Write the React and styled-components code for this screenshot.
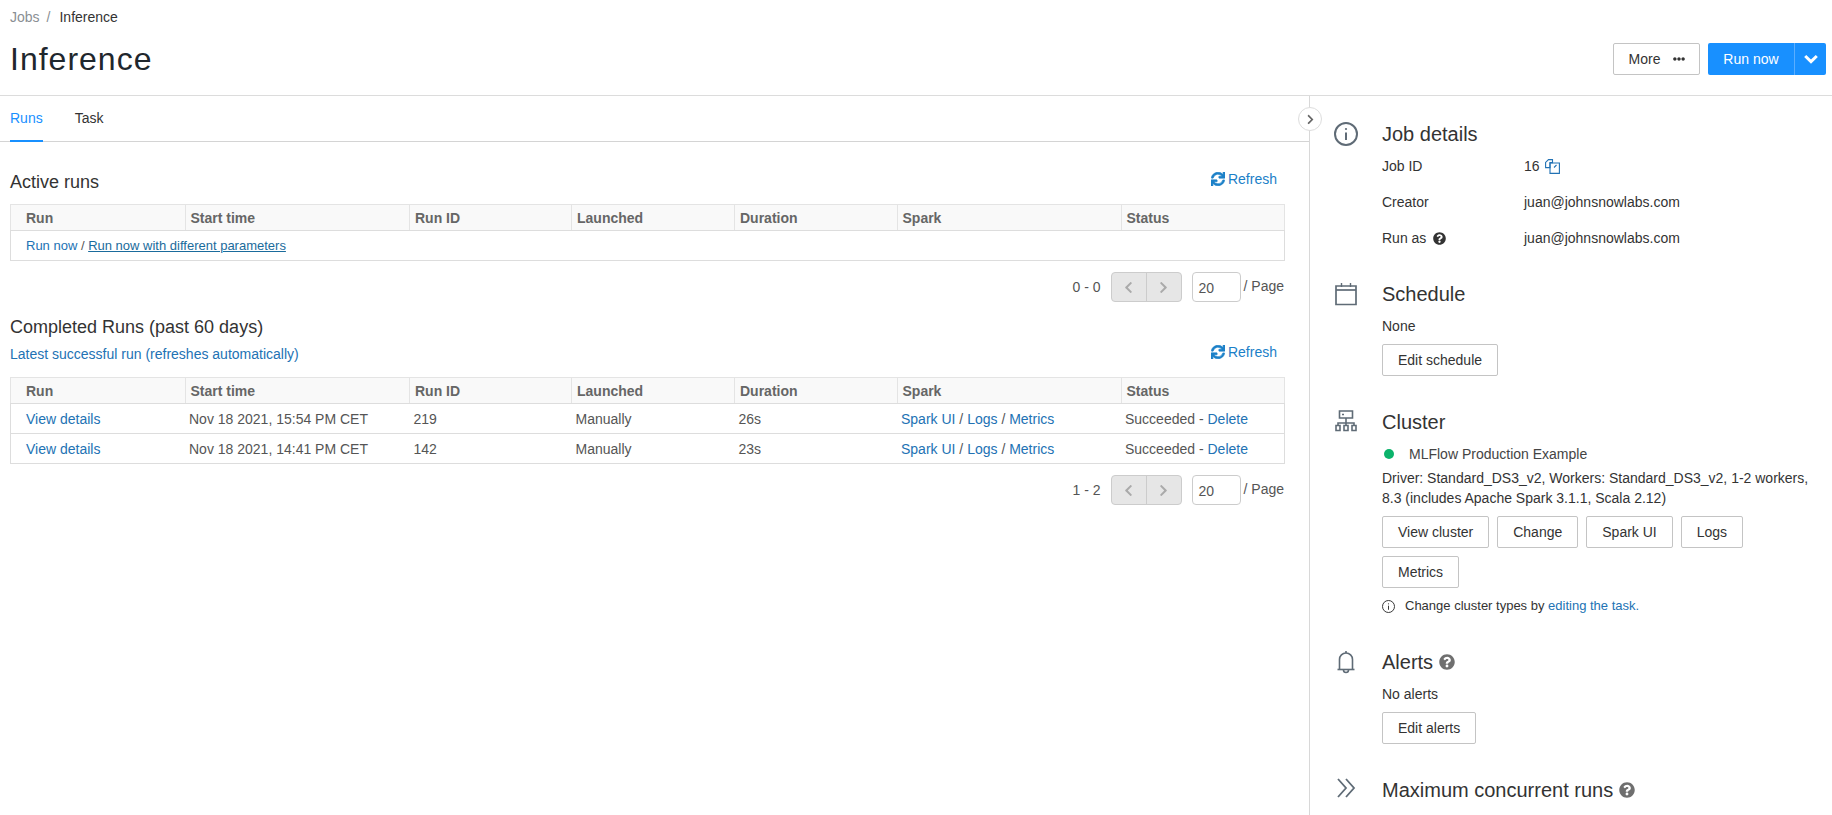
import React from 'react'
import styled, { createGlobalStyle } from 'styled-components'
import { FaChevronLeft, FaChevronRight, FaEllipsisH, FaQuestionCircle, FaSync } from 'react-icons/fa'

const GlobalStyle = createGlobalStyle`
  html, body {
    margin: 0;
    height: 100%;
    overflow: hidden;
    background: #fff;
  }

  body {
    font-family: "Liberation Sans", Arial, sans-serif;
    font-size: 14px;
    line-height: 20px;
    color: #333;
  }
`

const Page = styled.div`
  height: 815px;
  display: flex;
  flex-direction: column;
`

const Header = styled.header`
  height: 95px;
  flex: none;
  padding: 0 6px 0 10px;
  border-bottom: 1px solid #dcdcdc;
  display: flex;
  justify-content: space-between;
  align-items: flex-start;
`

const Crumbs = styled.div`
  margin-top: 7px;
  color: #8a8f93;

  span {
    margin: 0 9px 0 7px;
  }

  b {
    font-weight: normal;
    color: #333;
  }
`

const Title = styled.h1`
  margin: 10px 0 0;
  font-size: 32px;
  line-height: 44px;
  font-weight: normal;
  letter-spacing: 1px;
  color: #1f272d;
`

const Actions = styled.div`
  display: flex;
  gap: 8px;
  margin-top: 43px;
`

const MoreButton = styled.button`
  box-sizing: border-box;
  width: 87px;
  height: 32px;
  padding: 0 0 0 1px;
  border: 1px solid #c4c4c4;
  border-radius: 2px;
  background: #fff;
  color: #333;
  font: inherit;
  display: flex;
  align-items: center;
  justify-content: center;
  gap: 13px;

  svg {
    font-size: 12px;
  }
`

const SplitButton = styled.div`
  display: flex;
  height: 32px;
  border-radius: 2px;
  background: #1890ff;
  color: #fff;
`

const RunButton = styled.div`
  width: 87px;
  box-sizing: border-box;
  display: flex;
  align-items: center;
  justify-content: center;
  border-right: 1px solid #5aaeff;
`

const CaretButton = styled.div`
  width: 31px;
  display: flex;
  align-items: center;
  justify-content: center;
`

const Body = styled.div`
  flex: 1;
  display: flex;
  min-height: 0;
`

const Main = styled.main`
  box-sizing: border-box;
  width: 1309px;
  flex: none;
  position: relative;
`

const Tabs = styled.nav`
  height: 45px;
  padding-left: 10px;
  display: flex;
  gap: 32px;
  border-bottom: 1px solid #d4d4d4;
`

const Tab = styled.div`
  height: 46px;
  box-sizing: border-box;
  padding-top: 12px;
  color: ${props => (props.active ? '#1890ff' : '#333')};
  border-bottom: ${props => (props.active ? '2px solid #1890ff' : 'none')};
`

const Content = styled.div`
  padding: 0 25px 0 10px;
`

const SectionHead = styled.div`
  display: flex;
  justify-content: space-between;
  align-items: flex-start;
  margin-top: ${props => props.top}px;
  margin-bottom: ${props => props.bottom}px;
`

const SectionTitle = styled.h3`
  margin: 0;
  font-size: 18px;
  line-height: 24px;
  font-weight: normal;
  color: #333;
`

const LatestLink = styled.a`
  display: block;
  margin-top: 5px;
  color: #2272b4;
`

const RefreshLink = styled.a`
  display: flex;
  align-items: center;
  gap: 3px;
  margin-top: ${props => props.top}px;
  margin-right: 7px;
  color: #1b80c8;

  svg {
    font-size: 14px;
    stroke: currentColor;
    stroke-width: 24;
  }
`

const Table = styled.table`
  width: 1274px;
  table-layout: fixed;
  border-collapse: collapse;
  border: 1px solid #ddd;
`

const Th = styled.th`
  height: 25px;
  padding: 0 0 0 ${props => (props.first ? '15px' : '5px')};
  background: #f9f9f9;
  border: 1px solid #e4e4e4;
  border-bottom-color: #ddd;
  text-align: left;
  color: #666;
  font-size: 14px;
  font-weight: bold;
`

const Td = styled.td`
  height: 29px;
  padding: 0 0 0 ${props => (props.first ? '15px' : '4px')};
  border-top: 1px solid #ddd;
  color: #555;
  white-space: nowrap;
`

const ActionCell = styled(Td)`
  font-size: 13px;
`

const Link = styled.a`
  color: #2272b4;
`

const UnderLink = styled.a`
  color: #1a6b9c;
  text-decoration: underline;
`

const Pager = styled.div`
  display: flex;
  justify-content: flex-end;
  align-items: center;
  height: 30px;
  margin-top: 11px;
  color: #555;
`

const PagerCount = styled.span`
  margin-right: 10px;
`

const PagerButtons = styled.div`
  box-sizing: border-box;
  width: 71px;
  height: 30px;
  display: flex;
  border: 1px solid #ccc;
  border-radius: 4px;
  background: #e6e6e6;
  color: #aaa;
`

const PagerButton = styled.div`
  flex: 1;
  display: flex;
  align-items: center;
  justify-content: center;
  font-size: 13px;

  & + & {
    border-left: 1px solid #ccc;
  }
`

const PageSize = styled.div`
  box-sizing: border-box;
  width: 49px;
  height: 30px;
  margin-left: 10px;
  padding: 5px 0 0 6px;
  border: 1px solid #ccc;
  border-radius: 4px;
`

const PerPage = styled.span`
  margin-left: 3px;
  margin-top: -2px;
`

const CollapseToggle = styled.div`
  position: absolute;
  top: 11px;
  right: -13px;
  box-sizing: border-box;
  width: 24px;
  height: 24px;
  border: 1px solid #ddd;
  border-radius: 50%;
  background: #fff;
  color: #666;
  display: flex;
  align-items: center;
  justify-content: center;
  font-size: 11px;
  z-index: 2;
`

const Side = styled.aside`
  flex: 1;
  border-left: 1px solid #d8d8d8;
  padding-top: 26px;
  overflow: hidden;
`

const Section = styled.section`
  display: grid;
  grid-template-columns: 72px 1fr;
  margin-bottom: ${props => props.gap || 34}px;
`

const IconCell = styled.div`
  color: #5f6b76;
  display: flex;
  justify-content: center;
  width: 72px;
`

const SectionBody = styled.div`
  min-width: 0;
  padding-right: 20px;
`

const SideHeading = styled.h3`
  margin: 0 0 10px;
  font-size: 20px;
  line-height: 24px;
  font-weight: normal;
  color: #333;
  display: flex;
  align-items: center;
  gap: 6px;
  white-space: nowrap;

  svg {
    font-size: 16px;
    color: #6f6f6f;
  }
`

const DetailRow = styled.div`
  display: grid;
  grid-template-columns: 142px 1fr;
  height: 36px;
  margin-top: ${props => (props.first ? '-8px' : '0')};
`

const DetailLabel = styled.div`
  display: flex;
  align-items: center;
  align-self: start;
  gap: 7px;
  height: 20px;
  margin-top: 8px;

  svg {
    font-size: 13px;
    color: #333;
  }
`

const DetailValue = styled.div`
  display: flex;
  align-items: center;
  align-self: start;
  gap: 5px;
  height: 20px;
  margin-top: 8px;
`

const Plain = styled.div`
  margin-bottom: 8px;
`

const OutlineButton = styled.div`
  box-sizing: border-box;
  height: 32px;
  padding: 0 15px;
  border: 1px solid #c4c4c4;
  border-radius: 2px;
  background: #fff;
  display: inline-flex;
  align-items: center;
`

const ButtonRow = styled.div`
  display: flex;
  flex-wrap: wrap;
  gap: 8px;
  width: 425px;
`

const ClusterName = styled.div`
  display: flex;
  align-items: center;
  color: #444;
`

const StatusDot = styled.span`
  width: 10px;
  height: 10px;
  margin: 0 15px 0 2px;
  border-radius: 50%;
  background: #0bb36b;
`

const ClusterInfo = styled.div`
  margin: 4px 0 8px;
  width: 435px;
`

const Note = styled.div`
  display: flex;
  align-items: center;
  gap: 10px;
  height: 20px;
  margin-top: 8px;
  font-size: 13px;

  a {
    color: #2272b4;
  }
`

const InfoIcon = ({ size, weight }) => (
  <svg width={size} height={size} viewBox="0 0 24 24" fill="none" stroke="currentColor" strokeWidth={weight}>
    <circle cx="12" cy="12" r={12 - weight / 2} />
    <path d="M12 10.5V18" />
    <circle cx="12" cy="7" r="1.1" fill="currentColor" stroke="none" />
  </svg>
)

const CalendarIcon = () => (
  <svg width="22" height="24" viewBox="0 0 22 24" fill="none" stroke="currentColor" strokeWidth="1.7">
    <path d="M1 4h20v18.5H1z" />
    <path d="M1 8h20" />
    <path d="M6.5 1v4M15.5 1v4" strokeWidth="1.4" />
  </svg>
)

const ClusterIcon = () => (
  <svg width="22" height="22" viewBox="0 0 22 22" fill="none" stroke="currentColor" strokeWidth="1.6">
    <path d="M4.5 1h13v7h-13z" />
    <path d="M7 4.5h2" />
    <path d="M11 8v5M3 15v-2h16v2M11 13v2" />
    <path d="M1 15.5h4v5H1zM9 15.5h4v5H9zM17 15.5h4v5h-4z" />
  </svg>
)

const BellIcon = () => (
  <svg width="20" height="24" viewBox="0 0 20 24" fill="none" stroke="currentColor" strokeWidth="1.6">
    <path d="M3.5 19V9.5a6.5 6.5 0 0 1 13 0V19" />
    <path d="M1.5 19.5h17" />
    <path d="M10 1v2" />
    <path d="M7.5 20a2.5 2.5 0 0 0 5 0" />
  </svg>
)

const ChevronsIcon = () => (
  <svg width="20" height="20" viewBox="0 0 20 20" fill="none" stroke="currentColor" strokeWidth="1.8">
    <path d="M2 1l8 9-8 9" />
    <path d="M10 1l8 9-8 9" />
  </svg>
)

const CopyIcon = () => (
  <svg width="15" height="15" viewBox="0 0 15 15" fill="none" stroke="#2272b4" strokeWidth="1.1">
    <path d="M3.5.6h4v3h-2.5v5h-4.4V3.4z" />
    <path d="M5 4h9.4v10.4H5z" />
    <path d="M9 8.5L11.5 6" />
  </svg>
)

const CaretIcon = () => (
  <svg width="14" height="10" viewBox="0 0 14 10" fill="none" stroke="#fff" strokeWidth="3">
    <path d="M1.2 2l5.8 5.6L12.8 2" />
  </svg>
)

const columns = [174.5, 224.5, 162, 163, 162.5, 224, 163.5]
const headings = ['Run', 'Start time', 'Run ID', 'Launched', 'Duration', 'Spark', 'Status']

const completedRuns = [
  { id: 219, start: 'Nov 18 2021, 15:54 PM CET', duration: '26s' },
  { id: 142, start: 'Nov 18 2021, 14:41 PM CET', duration: '23s' },
]

const RunsTable = ({ children }) => (
  <Table>
    <colgroup>
      {columns.map((w, i) => <col key={i} style={{ width: w }} />)}
    </colgroup>
    <thead>
      <tr>
        {headings.map((h, i) => <Th key={h} first={i === 0}>{h}</Th>)}
      </tr>
    </thead>
    <tbody>{children}</tbody>
  </Table>
)

const Pagination = ({ range }) => (
  <Pager>
    <PagerCount>{range}</PagerCount>
    <PagerButtons>
      <PagerButton><FaChevronLeft /></PagerButton>
      <PagerButton><FaChevronRight /></PagerButton>
    </PagerButtons>
    <PageSize>20</PageSize>
    <PerPage>/ Page</PerPage>
  </Pager>
)

const App = () => (
  <Page>
    <GlobalStyle />
    <Header>
      <div>
        <Crumbs>Jobs<span>/</span><b>Inference</b></Crumbs>
        <Title>Inference</Title>
      </div>
      <Actions>
        <MoreButton>More <FaEllipsisH /></MoreButton>
        <SplitButton>
          <RunButton>Run now</RunButton>
          <CaretButton><CaretIcon /></CaretButton>
        </SplitButton>
      </Actions>
    </Header>
    <Body>
      <Main>
        <CollapseToggle><FaChevronRight /></CollapseToggle>
        <Tabs>
          <Tab active>Runs</Tab>
          <Tab>Task</Tab>
        </Tabs>
        <Content>
          <SectionHead top={28} bottom={10}>
            <SectionTitle>Active runs</SectionTitle>
            <RefreshLink top={-1}><FaSync /> Refresh</RefreshLink>
          </SectionHead>
          <RunsTable>
            <tr>
              <ActionCell first colSpan={7}>
                <Link>Run now</Link> / <UnderLink>Run now with different parameters</UnderLink>
              </ActionCell>
            </tr>
          </RunsTable>
          <Pagination range="0 - 0" />
          <SectionHead top={13} bottom={13}>
            <div>
              <SectionTitle>Completed Runs (past 60 days)</SectionTitle>
              <LatestLink>Latest successful run (refreshes automatically)</LatestLink>
            </div>
            <RefreshLink top={27}><FaSync /> Refresh</RefreshLink>
          </SectionHead>
          <RunsTable>
            {completedRuns.map(run => (
              <tr key={run.id}>
                <Td first><Link>View details</Link></Td>
                <Td>{run.start}</Td>
                <Td>{run.id}</Td>
                <Td>Manually</Td>
                <Td>{run.duration}</Td>
                <Td><Link>Spark UI</Link> / <Link>Logs</Link> / <Link>Metrics</Link></Td>
                <Td>Succeeded - <Link>Delete</Link></Td>
              </tr>
            ))}
          </RunsTable>
          <Pagination range="1 - 2" />
        </Content>
      </Main>
      <Side>
        <Section gap={26}>
          <IconCell><InfoIcon size={24} weight={2} /></IconCell>
          <SectionBody>
            <SideHeading>Job details</SideHeading>
            <DetailRow first>
              <DetailLabel>Job ID</DetailLabel>
              <DetailValue>16 <CopyIcon /></DetailValue>
            </DetailRow>
            <DetailRow>
              <DetailLabel>Creator</DetailLabel>
              <DetailValue>juan@johnsnowlabs.com</DetailValue>
            </DetailRow>
            <DetailRow>
              <DetailLabel>Run as <FaQuestionCircle /></DetailLabel>
              <DetailValue>juan@johnsnowlabs.com</DetailValue>
            </DetailRow>
          </SectionBody>
        </Section>
        <Section>
          <IconCell><CalendarIcon /></IconCell>
          <SectionBody>
            <SideHeading>Schedule</SideHeading>
            <Plain>None</Plain>
            <OutlineButton>Edit schedule</OutlineButton>
          </SectionBody>
        </Section>
        <Section>
          <IconCell><ClusterIcon /></IconCell>
          <SectionBody>
            <SideHeading>Cluster</SideHeading>
            <ClusterName><StatusDot />MLFlow Production Example</ClusterName>
            <ClusterInfo>
              Driver: Standard_DS3_v2, Workers: Standard_DS3_v2, 1-2 workers, 8.3 (includes Apache Spark 3.1.1, Scala 2.12)
            </ClusterInfo>
            <ButtonRow>
              <OutlineButton>View cluster</OutlineButton>
              <OutlineButton>Change</OutlineButton>
              <OutlineButton>Spark UI</OutlineButton>
              <OutlineButton>Logs</OutlineButton>
              <OutlineButton>Metrics</OutlineButton>
            </ButtonRow>
            <Note>
              <InfoIcon size={13} weight={1.8} />
              <span>Change cluster types by <a>editing the task.</a></span>
            </Note>
          </SectionBody>
        </Section>
        <Section>
          <IconCell><BellIcon /></IconCell>
          <SectionBody>
            <SideHeading>Alerts <FaQuestionCircle /></SideHeading>
            <Plain>No alerts</Plain>
            <OutlineButton>Edit alerts</OutlineButton>
          </SectionBody>
        </Section>
        <Section>
          <IconCell><ChevronsIcon /></IconCell>
          <SectionBody>
            <SideHeading>Maximum concurrent runs <FaQuestionCircle /></SideHeading>
          </SectionBody>
        </Section>
      </Side>
    </Body>
  </Page>
)

export default App
